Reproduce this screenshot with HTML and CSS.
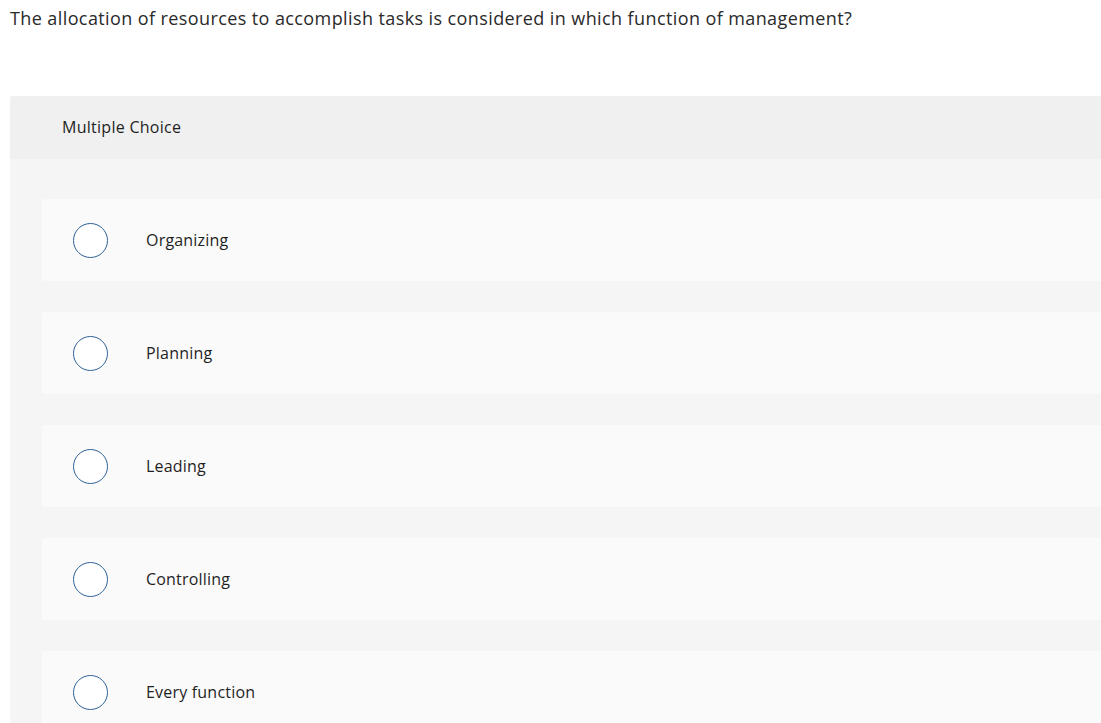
FILE: index.html
```html
<!DOCTYPE html>
<html>
<head>
<meta charset="utf-8">
<link rel="stylesheet" href="styles.css">
</head>
<body>
<div class="page">
  <p class="question">The allocation of resources to accomplish tasks is considered in which function of management?</p>
  <div class="panel">
    <div class="panel-head">Multiple Choice</div>
    <div class="panel-body">
      <div class="option"><span class="radio"></span><span class="label">Organizing</span></div>
      <div class="option"><span class="radio"></span><span class="label">Planning</span></div>
      <div class="option"><span class="radio"></span><span class="label">Leading</span></div>
      <div class="option"><span class="radio"></span><span class="label">Controlling</span></div>
      <div class="option"><span class="radio"></span><span class="label">Every function</span></div>
    </div>
  </div>
</div>
</body>
</html>
```

FILE: styles.css
```css
html, body {
  margin: 0;
  padding: 0;
  overflow: hidden;
  background: #ffffff;
}
.page {
  padding-left: 10px;
  font-family: "Open Sans", "Liberation Sans", sans-serif;
  color: #222222;
}
.question {
  margin: 0;
  padding-top: 6px;
  font-size: 18px;
  line-height: 24px;
  height: 90px;
  letter-spacing: 0.4px;
  color: #2a2a2a;
}
.panel {
  width: 1130px;
  background: #f5f5f5;
  border-top-left-radius: 3px;
}
.panel-head {
  background: #f0f0f0;
  height: 63px;
  display: flex;
  align-items: center;
  padding-left: 52px;
  padding-bottom: 1px;
  box-sizing: border-box;
  font-size: 16px;
  letter-spacing: 0.27px;
  color: #1f1f1f;
  border-top-left-radius: 3px;
}
.panel-body {
  padding: 40px 0 0 32px;
  display: flex;
  flex-direction: column;
  gap: 31px;
}
.option {
  background: #fafafa;
  height: 82px;
  border-radius: 3px;
  display: flex;
  align-items: center;
  padding-left: 31px;
}
.radio {
  width: 33px;
  height: 33px;
  border: 1.5px solid #2f6296;
  border-radius: 50%;
  background: #ffffff;
  flex: none;
}
.label {
  margin-left: 38px;
  font-size: 16px;
  letter-spacing: 0.2px;
  color: #1f1f1f;
}
```
